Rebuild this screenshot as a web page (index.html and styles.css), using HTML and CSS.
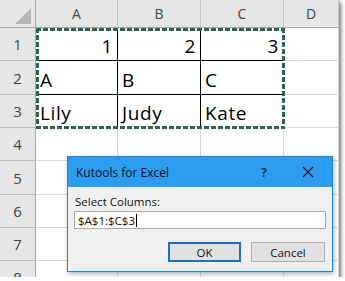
FILE: index.html
```html
<!DOCTYPE html>
<html>
<head>
<meta charset="utf-8">
<link rel="stylesheet" href="styles.css">
</head>
<body>
<div class="sheet">
  <div class="grid">
    <div class="corner"><svg width="18" height="17" viewBox="0 0 18 17"><polygon points="17,0 17,16 1,16" fill="#b7b7b7"/></svg></div>
    <div class="ch">A</div><div class="ch">B</div><div class="ch">C</div><div class="ch">D</div>

    <div class="rh">1</div><div class="c in num">1</div><div class="c in num">2</div><div class="c in num">3</div><div class="c"></div>
    <div class="rh">2</div><div class="c in">A</div><div class="c in">B</div><div class="c in">C</div><div class="c"></div>
    <div class="rh">3</div><div class="c in">Lily</div><div class="c in">Judy</div><div class="c in">Kate</div><div class="c"></div>
    <div class="rh">4</div><div class="c"></div><div class="c"></div><div class="c"></div><div class="c"></div>
    <div class="rh">5</div><div class="c"></div><div class="c"></div><div class="c"></div><div class="c"></div>
    <div class="rh">6</div><div class="c"></div><div class="c"></div><div class="c"></div><div class="c"></div>
    <div class="rh">7</div><div class="c"></div><div class="c"></div><div class="c"></div><div class="c"></div>
    <div class="rh">8</div><div class="c"></div><div class="c"></div><div class="c"></div><div class="c"></div>
  </div>
  <div class="marquee"></div>
  <div class="dialog">
    <div class="titlebar">
      <span class="title">Kutools for Excel</span>
      <span class="help">?</span>
      <span class="close"><svg width="12" height="12" viewBox="0 0 12 12"><path d="M1 1 L11 11 M11 1 L1 11" stroke="#1a1a1a" stroke-width="1.1" fill="none"/></svg></span>
    </div>
    <div class="body">
      <div class="label">Select Columns:</div>
      <div class="input"><span>$A$1:$C$3</span><span class="caret"></span></div>
      <div class="buttons">
        <div class="btn primary">OK</div>
        <div class="btn">Cancel</div>
      </div>
    </div>
  </div>
</div>
</body>
</html>
```

FILE: styles.css
```css
html, body {
  margin: 0;
  padding: 0;
  background: #ffffff;
}

.sheet {
  position: relative;
  width: 339px;
  height: 277px;
  overflow: hidden;
  background: #fff;
  box-shadow: 2px 2px 4px rgba(0, 0, 0, 0.55);
}

.grid {
  display: grid;
  grid-template-columns: 36px 82px 83px 83px 55px;
  grid-template-rows: 28px 33px 34px 33px 33px 34px 33px 33px 33px;
}

.grid > div {
  box-sizing: border-box;
}

.corner {
  background: #e6e6e6;
  border-right: 1px solid #a9a9a9;
  border-bottom: 1px solid #a9a9a9;
  display: flex;
  align-items: flex-end;
  justify-content: flex-end;
  padding: 0 3px 2px 0;
}

.ch {
  background: #e6e6e6;
  border-right: 1px solid #c4c4c4;
  border-bottom: 1px solid #a9a9a9;
  font-family: "Open Sans", sans-serif;
  font-size: 14px;
  color: #444;
  display: flex;
  align-items: center;
  justify-content: center;
}

.rh {
  background: #e6e6e6;
  border-right: 1px solid #a9a9a9;
  border-bottom: 1px solid #bdbdbd;
  font-family: "Open Sans", sans-serif;
  font-size: 15px;
  color: #444;
  display: flex;
  align-items: center;
  justify-content: center;
}

.c {
  border-right: 1px solid #dadada;
  border-bottom: 1px solid #dadada;
  font-family: "Open Sans", sans-serif;
  font-size: 19px;
  letter-spacing: 0.6px;
  color: #000;
  display: flex;
  align-items: flex-end;
  padding: 0 4px 2px 4px;
  line-height: 24px;
}

.c.in {
  border-right-color: #000;
  border-bottom-color: #000;
}

.c.num {
  justify-content: flex-end;
}

.marquee {
  position: absolute;
  left: 36px;
  top: 28px;
  width: 249px;
  height: 101px;
  background:
    repeating-linear-gradient(90deg, #24694a 0 5px, #fff 5px 7px) left top / 100% 3px no-repeat,
    repeating-linear-gradient(90deg, #24694a 0 5px, #fff 5px 7px) left bottom / 100% 3px no-repeat,
    repeating-linear-gradient(180deg, #24694a 0 5px, #fff 5px 7px) left top / 3px 100% no-repeat,
    repeating-linear-gradient(180deg, #24694a 0 5px, #fff 5px 7px) right top / 3px 100% no-repeat;
}

.dialog {
  position: absolute;
  left: 67px;
  top: 156px;
  width: 266px;
  height: 116px;
  box-sizing: border-box;
  border: 1px solid #1a88df;
  background: #f0f0f0;
  box-shadow: 1px 2px 5px rgba(0, 0, 0, 0.3);
  font-family: "Open Sans", sans-serif;
  display: flex;
  flex-direction: column;
}

.titlebar {
  height: 30px;
  background: #2b9cf0;
  display: flex;
  align-items: center;
  padding: 0 9px 0 8px;
}

.title {
  font-size: 12px;
  color: #111;
}

.help {
  margin-left: auto;
  font-size: 12px;
  font-weight: 700;
  color: #1d3550;
  width: 10px;
  text-align: center;
}

.close {
  width: 30px;
  margin-left: 24px;
  display: flex;
  justify-content: center;
  align-items: center;
}

.body {
  padding: 7px 6px 9px 6px;
  display: flex;
  flex-direction: column;
}

.label {
  font-size: 11.5px;
  line-height: 16px;
  color: #111;
  padding-left: 1px;
}

.input {
  margin-top: 1px;
  height: 18px;
  box-sizing: border-box;
  border: 1px solid #a8a8a8;
  background: #fff;
  font-size: 11.5px;
  color: #111;
  padding-left: 3px;
  display: flex;
  align-items: center;
}

.caret {
  display: inline-block;
  width: 1px;
  height: 13px;
  background: #000;
  margin-left: 1px;
}

.buttons {
  margin-top: 13px;
  display: flex;
  justify-content: flex-end;
  gap: 10px;
  padding-right: 1px;
}

.btn {
  width: 74px;
  height: 20px;
  box-sizing: border-box;
  border: 1px solid #adadad;
  background: #e1e1e1;
  font-size: 11.5px;
  color: #111;
  display: flex;
  align-items: center;
  justify-content: center;
}

.btn.primary {
  width: 73px;
  border: 2px solid #1a6fc0;
}
```
